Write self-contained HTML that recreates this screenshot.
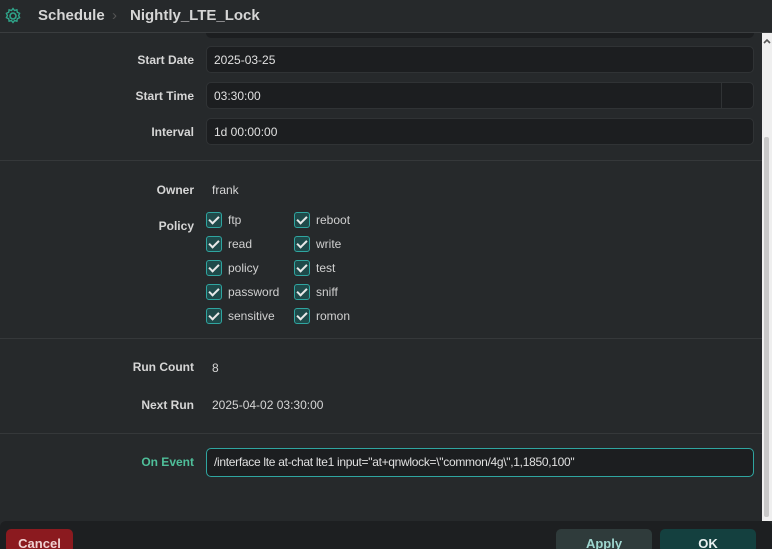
<!DOCTYPE html>
<html><head><style>
*{box-sizing:border-box;margin:0;padding:0}
html,body{width:772px;height:549px;overflow:hidden}
body{background:#26292b;font-family:"Liberation Sans",sans-serif;color:#d8d8d8;font-size:12px;position:relative}
.hdr{position:absolute;left:0;top:0;width:772px;height:33px;background:#26292b;border-bottom:1px solid #3a3d3f}
.hdr span{position:absolute;top:7px;font-size:15px;font-weight:bold;color:#d6d6d6}
.lbl{position:absolute;width:194px;text-align:right;font-weight:bold;font-size:12px;color:#d6d6d6}
.inp{position:absolute;left:206px;width:548px;height:27px;background:#1c1e20;border:1px solid #303335;border-radius:5px;padding:6px 7px;font-size:12px;color:#e0e0e0}
.val{position:absolute;left:212px;font-size:12px;color:#d6d6d6}
.sep{position:absolute;left:0;width:762px;height:1px;background:#35383a}
.cb{position:absolute;width:16px;height:16px;border:1.5px solid #2fa5a0;border-radius:3px;background:#1f4a4a}
.cb:after{content:"";position:absolute;left:4px;top:1px;width:4px;height:8px;border:solid #e8e8e8;border-width:0 2px 2px 0;transform:rotate(45deg)}
.ct{position:absolute;font-size:12px;color:#d0d0d0}
.sb{position:absolute;left:762px;top:33px;width:10px;height:488px;background:#efefef}
.foot{position:absolute;left:0;top:521px;width:772px;height:28px;background:#1d1f21;border-radius:6px 6px 0 0}
.btn{position:absolute;top:529px;height:24px;border-radius:5px;font-weight:bold;font-size:13px;text-align:center;padding-top:7px}
</style></head><body>
<div class="hdr">
<svg style="position:absolute;left:4px;top:7px" width="18" height="18" viewBox="0 0 18 18"><circle cx="9" cy="9" r="3" fill="none" stroke="#2fa58a" stroke-width="1.6"/><path d="M9 1.5l1.5 2 2.4-.7.4 2.5 2.3 1-1 2.2 1 2.2-2.3 1-.4 2.5-2.4-.7-1.5 2-1.5-2-2.4.7-.4-2.5-2.3-1 1-2.2-1-2.2 2.3-1 .4-2.5 2.4.7z" fill="none" stroke="#2fa58a" stroke-width="1.4"/></svg>
<span style="left:38px">Schedule</span>
<span style="left:112px;color:#555;font-weight:normal">›</span>
<span style="left:130px">Nightly_LTE_Lock</span>
</div>
<div style="position:absolute;left:206px;top:33px;width:548px;height:5px;background:#1c1e20;border-radius:0 0 5px 5px"></div>
<div class="lbl" style="top:53px">Start Date</div><div class="inp" style="top:46px">2025-03-25</div>
<div class="lbl" style="top:89px">Start Time</div><div class="inp" style="top:82px">03:30:00</div>
<div style="position:absolute;left:721px;top:83px;width:1px;height:25px;background:#303335"></div>
<div class="lbl" style="top:125px">Interval</div><div class="inp" style="top:118px">1d 00:00:00</div>
<div class="sep" style="top:160px"></div>
<div class="lbl" style="top:183px">Owner</div><div class="val" style="top:183px">frank</div>
<div class="lbl" style="top:219px">Policy</div>
<div class="cb" style="left:206px;top:212px"></div><div class="ct" style="left:228px;top:213px">ftp</div>
<div class="cb" style="left:294px;top:212px"></div><div class="ct" style="left:316px;top:213px">reboot</div>
<div class="cb" style="left:206px;top:236px"></div><div class="ct" style="left:228px;top:237px">read</div>
<div class="cb" style="left:294px;top:236px"></div><div class="ct" style="left:316px;top:237px">write</div>
<div class="cb" style="left:206px;top:260px"></div><div class="ct" style="left:228px;top:261px">policy</div>
<div class="cb" style="left:294px;top:260px"></div><div class="ct" style="left:316px;top:261px">test</div>
<div class="cb" style="left:206px;top:284px"></div><div class="ct" style="left:228px;top:285px">password</div>
<div class="cb" style="left:294px;top:284px"></div><div class="ct" style="left:316px;top:285px">sniff</div>
<div class="cb" style="left:206px;top:308px"></div><div class="ct" style="left:228px;top:309px">sensitive</div>
<div class="cb" style="left:294px;top:308px"></div><div class="ct" style="left:316px;top:309px">romon</div>
<div class="sep" style="top:338px"></div>
<div class="lbl" style="top:360px">Run Count</div><div class="val" style="top:361px">8</div>
<div class="lbl" style="top:398px">Next Run</div><div class="val" style="top:398px">2025-04-02 03:30:00</div>
<div class="sep" style="top:433px"></div>
<div class="lbl" style="top:455px;color:#4fbf9a">On Event</div>
<div class="inp" style="top:448px;height:29px;border-color:#2fa5a0;letter-spacing:-0.3px">/interface lte at-chat lte1 input="at+qnwlock=\"common/4g\",1,1850,100"</div>
<div class="sb"><svg style="position:absolute;left:1px;top:5px" width="8" height="6" viewBox="0 0 8 6"><path d="M1 5L4 2L7 5" fill="none" stroke="#555" stroke-width="1.6"/></svg><div style="position:absolute;left:2px;top:104px;width:5px;height:380px;background:#c8c8c8;border-radius:2px"></div></div>
<div class="foot"></div>
<div class="btn" style="left:6px;width:67px;background:#8b1a1f;color:#f0d0d0">Cancel</div>
<div class="btn" style="left:556px;width:96px;background:#2f3b3b;color:#9fd6cf">Apply</div>
<div class="btn" style="left:660px;width:96px;background:#14403f;color:#e8f0f0">OK</div>
</body></html>
